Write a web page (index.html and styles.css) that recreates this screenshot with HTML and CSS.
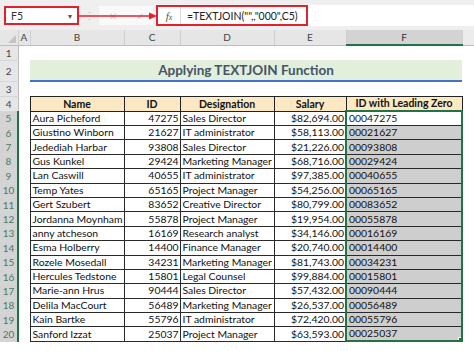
FILE: index.html
```html
<!DOCTYPE html>
<html lang="en">
<head>
    <meta charset="UTF-8">
    <title>Applying TEXTJOIN Function</title>
    <link rel="stylesheet" href="styles.css">
</head>
<body>
    <!-- Formula bar -->
    <div class="toolbar">
        <div class="namebox">
            <span>F5</span>
            <span class="drop">&#9662;</span>
        </div>
        <div class="dots">&#8942;</div>
        <div class="edit-btns">
            <span>&#10005;</span>
            <span>&#10003;</span>
        </div>
        <div class="fbar">
            <div class="fgroup">
                <div class="fx"><i>f</i><i class="x">x</i></div>
                <div class="formula">=TEXTJOIN("",,"000",C5)</div>
            </div>
        </div>
        <svg class="arrow" width="80" height="10" viewBox="0 0 80 10">
            <line x1="0" y1="5" x2="74" y2="5" stroke="#e0222e" stroke-width="1.6"/>
            <path d="M70 1.5 L78 5 L70 8.5 Z" fill="#e0222e"/>
        </svg>
    </div>

    <!-- Worksheet -->
    <table class="sheet">
        <colgroup>
            <col style="width: 18px">
            <col style="width: 12px">
            <col style="width: 94px">
            <col style="width: 56px">
            <col style="width: 94px">
            <col style="width: 72px">
            <col style="width: 116px">
            <col>
        </colgroup>
        <thead>
            <tr class="colhead">
                <th class="corner"><span class="tri"></span></th>
                <th>A</th>
                <th>B</th>
                <th>C</th>
                <th>D</th>
                <th>E</th>
                <th class="sel">F</th>
                <th class="rest"></th>
            </tr>
        </thead>
        <tbody>
            <tr class="r-s"><th>1</th><td colspan="7"></td></tr>
            <tr class="r-title">
                <th>2</th>
                <td></td>
                <td colspan="5" class="title">Applying TEXTJOIN Function</td>
                <td></td>
            </tr>
            <tr class="r-s"><th>3</th><td colspan="7"></td></tr>
            <tr class="r-s">
                <th>4</th>
                <td></td>
                <td class="hd">Name</td>
                <td class="hd">ID</td>
                <td class="hd">Designation</td>
                <td class="hd">Salary</td>
                <td class="hd">ID with Leading Zero</td>
                <td></td>
            </tr>
            <tr class="r-d"><th class="sel">5</th><td></td><td class="d">Aura Picheford</td><td class="d num">47275</td><td class="d">Sales Director</td><td class="d num">$82,694.00</td><td class="d lead first active">00047275</td><td></td></tr>
            <tr class="r-d"><th class="sel">6</th><td></td><td class="d">Giustino Winborn</td><td class="d num">21627</td><td class="d">IT administrator</td><td class="d num">$58,113.00</td><td class="d lead">00021627</td><td></td></tr>
            <tr class="r-d"><th class="sel">7</th><td></td><td class="d">Jedediah Harbar</td><td class="d num">93808</td><td class="d">Sales Director</td><td class="d num">$21,226.00</td><td class="d lead">00093808</td><td></td></tr>
            <tr class="r-d"><th class="sel">8</th><td></td><td class="d">Gus Kunkel</td><td class="d num">29424</td><td class="d">Marketing Manager</td><td class="d num">$68,716.00</td><td class="d lead">00029424</td><td></td></tr>
            <tr class="r-d"><th class="sel">9</th><td></td><td class="d">Lan Caswill</td><td class="d num">40655</td><td class="d">IT administrator</td><td class="d num">$97,385.00</td><td class="d lead">00040655</td><td></td></tr>
            <tr class="r-d"><th class="sel">10</th><td></td><td class="d">Temp Yates</td><td class="d num">65165</td><td class="d">Project Manager</td><td class="d num">$54,256.00</td><td class="d lead">00065165</td><td></td></tr>
            <tr class="r-d"><th class="sel">11</th><td></td><td class="d">Gert Szubert</td><td class="d num">83652</td><td class="d">Creative Director</td><td class="d num">$80,799.00</td><td class="d lead">00083652</td><td></td></tr>
            <tr class="r-d"><th class="sel">12</th><td></td><td class="d">Jordanna Moynham</td><td class="d num">55878</td><td class="d">Project Manager</td><td class="d num">$19,954.00</td><td class="d lead">00055878</td><td></td></tr>
            <tr class="r-d"><th class="sel">13</th><td></td><td class="d">anny atcheson</td><td class="d num">16169</td><td class="d">Research analyst</td><td class="d num">$34,146.00</td><td class="d lead">00016169</td><td></td></tr>
            <tr class="r-d"><th class="sel">14</th><td></td><td class="d">Esma Holberry</td><td class="d num">14400</td><td class="d">Finance Manager</td><td class="d num">$20,740.00</td><td class="d lead">00014400</td><td></td></tr>
            <tr class="r-d"><th class="sel">15</th><td></td><td class="d">Rozele Mosedall</td><td class="d num">34231</td><td class="d">Marketing Manager</td><td class="d num">$81,743.00</td><td class="d lead">00034231</td><td></td></tr>
            <tr class="r-d"><th class="sel">16</th><td></td><td class="d">Hercules Tedstone</td><td class="d num">15801</td><td class="d">Legal Counsel</td><td class="d num">$99,884.00</td><td class="d lead">00015801</td><td></td></tr>
            <tr class="r-d"><th class="sel">17</th><td></td><td class="d">Marie-ann Hrus</td><td class="d num">90444</td><td class="d">Sales Director</td><td class="d num">$57,432.00</td><td class="d lead">00090444</td><td></td></tr>
            <tr class="r-d"><th class="sel">18</th><td></td><td class="d">Delila MacCourt</td><td class="d num">56489</td><td class="d">Marketing Manager</td><td class="d num">$26,537.00</td><td class="d lead">00056489</td><td></td></tr>
            <tr class="r-d"><th class="sel">19</th><td></td><td class="d">Kain Bartke</td><td class="d num">55796</td><td class="d">IT administrator</td><td class="d num">$72,420.00</td><td class="d lead">00055796</td><td></td></tr>
            <tr class="r-d"><th class="sel">20</th><td></td><td class="d">Sanford Izzat</td><td class="d num">25037</td><td class="d">Project Manager</td><td class="d num">$63,593.00</td><td class="d lead last">00025037</td><td></td></tr>
            <tr class="r-s"><th class="blank"></th><td colspan="7"></td></tr>
        </tbody>
    </table>
</body>
</html>
```

FILE: styles.css
```css
body {
    margin: 0;
    width: 474px;
    height: 351px;
    overflow: hidden;
    background-color: #ffffff;
    font-family: Lato, 'Open Sans', sans-serif;
    color: #111111;
}

/* Formula bar */
.toolbar {
    position: relative;
    height: 30px;
    background-color: #efefef;
    display: flex;
    align-items: center;
    box-sizing: border-box;
    padding: 4px 0 3px 4px;
}

.namebox {
    width: 75px;
    height: 19px;
    box-sizing: border-box;
    border: 2px solid #e0222e;
    background-color: #ffffff;
    display: flex;
    align-items: center;
    justify-content: space-between;
    padding: 0 5px 0 5px;
    font-size: 10.5px;
    color: #333333;
}

.namebox .drop {
    font-size: 8px;
    color: #555555;
}

.dots {
    width: 20px;
    text-align: center;
    color: #b5b5b5;
    font-size: 11px;
}

.edit-btns {
    width: 54px;
    height: 19px;
    background-color: #f9f9f9;
    display: flex;
    align-items: center;
    justify-content: space-around;
    color: #cfc6c6;
    font-size: 10px;
    margin-right: 3px;
}

.fbar {
    flex: 1;
    height: 21px;
    background-color: #ffffff;
    display: flex;
}

.fgroup {
    width: 152px;
    box-sizing: border-box;
    border: 2px solid #e0222e;
    display: flex;
    align-items: center;
}

.fx {
    width: 23px;
    height: 100%;
    box-sizing: border-box;
    border-right: 1px solid #d8d8d8;
    display: flex;
    align-items: center;
    justify-content: center;
    font-family: 'Liberation Serif', serif;
    font-size: 11px;
    color: #555555;
}

.fx .x {
    font-size: 8px;
    margin-top: 3px;
}

.formula {
    padding-left: 6px;
    font-size: 10.5px;
    color: #222222;
    white-space: nowrap;
}

/* red annotation arrow from the name box to the fx box */
.arrow {
    position: absolute;
    left: 79px;
    top: 11px;
}

/* Worksheet grid */
.sheet {
    border-collapse: collapse;
    table-layout: fixed;
    width: 474px;
    font-size: 10.4px;
}

.sheet th {
    background-color: #e6e6e6;
    font-weight: normal;
    color: #444444;
    padding: 0;
    font-size: 10px;
}

.colhead {
    height: 15px;
}

.colhead th {
    border-right: 1px solid #cfcfcf;
    border-bottom: 1px solid #bdbdbd;
}

.colhead th.sel {
    background-color: #d3d3d3;
    border-bottom: 2px solid #217346;
    color: #333333;
}

.colhead th.rest {
    background-color: #ececec;
    border-right: none;
}

.corner {
    position: relative;
}

.corner .tri {
    position: absolute;
    right: 2px;
    bottom: 2px;
    width: 0;
    height: 0;
    border-left: 8px solid transparent;
    border-bottom: 8px solid #c4c4c4;
}

tbody th {
    border-right: 1px solid #bdbdbd;
    border-bottom: 1px solid #d6d6d6;
    text-align: center;
}

tbody th.sel {
    background-color: #d3d3d3;
    border-right: 2px solid #217346;
    color: #4f7a60;
}

.sheet th.blank {
    background-color: #ffffff;
    border: none;
}

td {
    padding: 0;
}

.r-s {
    height: 15px;
}

.r-title {
    height: 21px;
}

.r-d {
    height: 14.4px;
}

.title {
    background-color: #e2efda;
    border-bottom: 2px solid #4472c4;
    text-align: center;
    font-weight: bold;
    font-size: 13.5px;
    color: #44546a;
}

.hd {
    background-color: #fce8c3;
    border: 1px solid #222222;
    text-align: center;
    font-weight: bold;
    font-size: 10.5px;
}

.d {
    border: 1px solid #2a2a2a;
    padding: 0 1px 0 2px;
    white-space: nowrap;
    overflow: hidden;
    line-height: 13px;
}

.num {
    text-align: right;
}

/* selected range F5:F20 */
.lead {
    background-color: #cecece;
    border-left: 2px solid #217346;
    border-right: 2px solid #217346;
}

.lead.first {
    border-top: 2px solid #217346;
}

.lead.active {
    background-color: #ffffff;
}

.lead.last {
    position: relative;
    border-bottom: 2px solid #217346;
}

.lead.last::after {
    content: "";
    position: absolute;
    right: -4px;
    bottom: -4px;
    width: 5px;
    height: 5px;
    background-color: #217346;
    border: 1px solid #ffffff;
}
```
